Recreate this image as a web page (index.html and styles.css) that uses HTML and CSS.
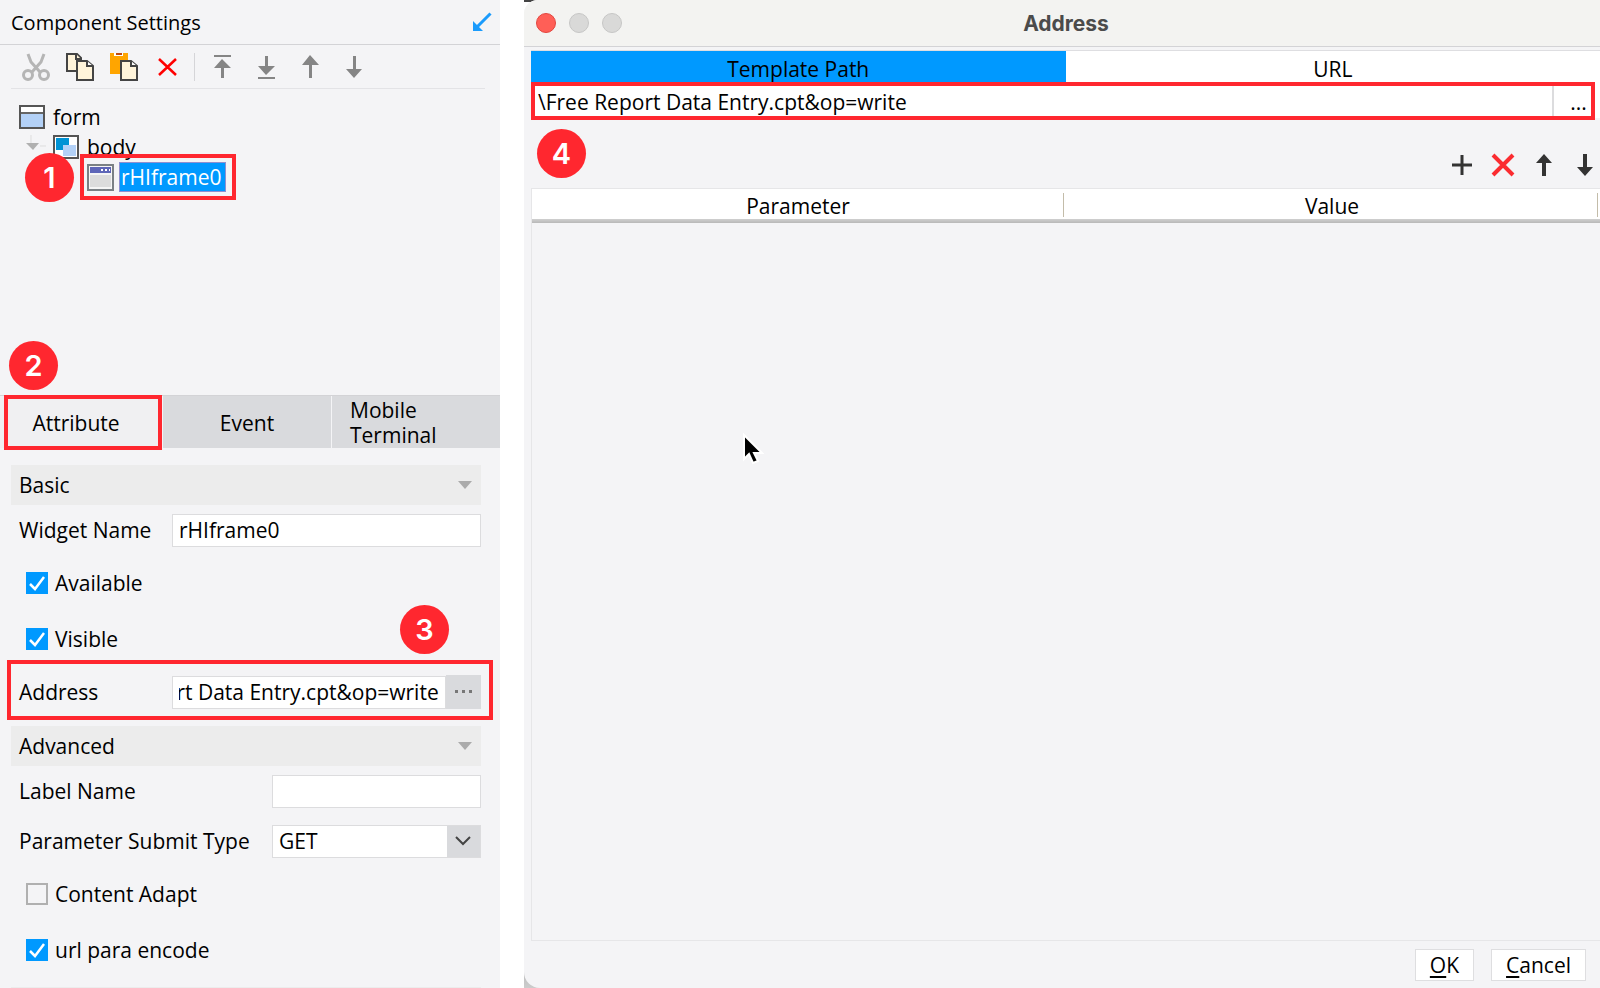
FILE: index.html
```html
<!DOCTYPE html>
<html lang="en">
<head>
  <meta charset="UTF-8">
  <meta name="viewport" content="width=device-width, initial-scale=1.0">
  <title>Component Settings</title>
  <link rel="stylesheet" href="styles.css">
</head>
<body>
  <aside class="settings">
    <header class="settings-header">
      <h1>Component Settings</h1>
      <button class="icon-button" aria-label="Collapse panel">
        <svg width="20" height="20" viewBox="0 0 20 20"><path d="M18.500 1.500 5 15" stroke="#1a9bfc" stroke-width="3" fill="none"/><path d="M1 9v10h10z" fill="#1a9bfc"/></svg>
      </button>
    </header>

    <div class="toolbar">
      <button class="icon-button" aria-label="Cut">
        <svg width="28" height="28" viewBox="0 0 28 28" fill="none" stroke="#b5b5b5"><path d="M6 1l3 8 9 10M22 1l-3 8-9 10" stroke-width="3"/><circle cx="6" cy="22" r="4.500" stroke-width="3"/><circle cx="22" cy="22" r="4.500" stroke-width="3"/></svg>
      </button>
      <button class="icon-button" aria-label="Copy">
        <svg width="28" height="28" viewBox="0 0 28 28" fill="#fff4da" stroke="#444" stroke-width="2"><path d="M1 1h10l4 4v13H1z"/><path d="M10 1v5h5"/><path d="M11 8h10l6 5v14H11z"/><path d="M21 8v5h6" fill="#fff"/></svg>
      </button>
      <button class="icon-button" aria-label="Paste">
        <svg width="28" height="28" viewBox="0 0 28 28"><path d="M0 0h18v21H0z" fill="#ffa500"/><path d="M4 0h9v3H4z" fill="#fff"/><path d="M6 0h6v2H6z" fill="#c04a10"/><g fill="#fff4da" stroke="#444" stroke-width="2"><path d="M11 8h10l6 5v14H11z"/><path d="M21 8v5h6" fill="#fff"/></g></svg>
      </button>
      <button class="icon-button" aria-label="Delete">
        <svg width="28" height="28" viewBox="0 0 28 28"><path d="M5 6l17 16M22 6 5 22" stroke="#f00" stroke-width="2.500"/></svg>
      </button>
      <span class="toolbar-divider"></span>
      <button class="icon-button" aria-label="Move to top">
        <svg width="28" height="28" viewBox="0 0 28 28" fill="#858585"><path d="M6 2h17v2H6zM14 6l9 9h-7v10h-3V15H6z"/></svg>
      </button>
      <button class="icon-button" aria-label="Move to bottom">
        <svg width="28" height="28" viewBox="0 0 28 28" fill="#858585"><path d="M6 24h17v2H6zM13 3h3v10h7l-9 9-8-9h7z"/></svg>
      </button>
      <button class="icon-button" aria-label="Move up">
        <svg width="28" height="28" viewBox="0 0 28 28" fill="#858585"><path d="M14 2l9 10h-7v13h-3V12H6z"/></svg>
      </button>
      <button class="icon-button" aria-label="Move down">
        <svg width="28" height="28" viewBox="0 0 28 28" fill="#858585"><path d="M13 3h3v13h6l-8 9-8-9h7z"/></svg>
      </button>
    </div>

    <ul class="tree">
      <li class="tree-item">
        <svg width="26" height="24" viewBox="0 0 26 24"><path d="M1 1h24v22H1z" fill="#b3d1f7" stroke="#555" stroke-width="2"/><path d="M2 2h22v5H2z" fill="#fff"/><path d="M2 7h22v2H2z" fill="#666"/></svg>
        <span>form</span>
      </li>
      <li class="tree-item level-1">
        <svg class="tree-toggle" width="20" height="24" viewBox="0 0 20 24"><path d="M5 0v8M14 11h6" stroke="#ddd"/><path d="M0 8h13l-6 7z" fill="#b0b0b0"/></svg>
        <svg width="26" height="24" viewBox="0 0 26 24"><path d="M1 1h24v22H1z" fill="#fff" stroke="#555" stroke-width="2"/><path d="M3 3h13v12H3z" fill="#0093d5"/><path d="M10 10h13v11H10z" fill="#b3d1f7"/></svg>
        <span>body</span>
      </li>
      <li class="tree-item level-2">
        <svg width="27" height="27" viewBox="0 0 27 27"><path d="M1 1h25v25H1z" fill="#f5f5f5" stroke="#7a8084" stroke-width="2"/><path d="M3 3h21v6H3z" fill="#5e66b8"/><path d="M14 5h2v2h-2zM18 5h2v2h-2zM22 5h1v2h-1z" fill="#fff"/><path d="M3 11h21v12H3z" fill="#dcdcdc"/></svg>
        <span class="tree-selected">rHIframe0</span>
        <span class="frame frame-tree"></span>
        <span class="step step-1">1</span>
      </li>
    </ul>

    <nav class="tabs">
      <button class="tab active">Attribute<span class="frame frame-tab"></span></button>
      <button class="tab">Event</button>
      <button class="tab wrap">Mobile Terminal</button>
      <span class="step step-2">2</span>
    </nav>

    <form class="attributes">
      <h2 class="section-title">Basic <span class="caret"></span></h2>
      <div class="row">
        <label for="widget-name">Widget Name</label>
        <input type="text" id="widget-name" class="field" value="rHIframe0">
      </div>
      <div class="row check">
        <input type="checkbox" id="available" checked>
        <label for="available">Available</label>
      </div>
      <div class="row check">
        <input type="checkbox" id="visible" checked>
        <label for="visible">Visible</label>
      </div>
      <div class="row">
        <label for="address">Address</label>
        <input type="text" id="address" class="field" value="\Free Report Data Entry.cpt&amp;op=write">
        <button type="button" class="browse" aria-label="Edit address">
          <svg width="18" height="4" viewBox="0 0 18 4" fill="#777"><path d="M0 0h3v3H0zM7 0h3v3H7zM14 0h3v3h-3z"/></svg>
        </button>
        <span class="frame frame-address"></span>
        <span class="step step-3">3</span>
      </div>
      <h2 class="section-title">Advanced <span class="caret"></span></h2>
      <div class="row wide-label">
        <label for="label-name">Label Name</label>
        <input type="text" id="label-name" class="field">
      </div>
      <div class="row wide-label">
        <label for="submit-type">Parameter Submit Type</label>
        <select id="submit-type" class="field">
          <option>GET</option>
          <option>POST</option>
        </select>
      </div>
      <div class="row check">
        <input type="checkbox" id="content-adapt">
        <label for="content-adapt">Content Adapt</label>
      </div>
      <div class="row check">
        <input type="checkbox" id="url-encode" checked>
        <label for="url-encode">url para encode</label>
      </div>
      <div class="section-title"></div>
    </form>
  </aside>

  <main class="stage">
    <section class="dialog">
      <header class="titlebar">
        <button class="light close" aria-label="Close"></button>
        <button class="light" aria-label="Minimize"></button>
        <button class="light" aria-label="Zoom"></button>
        <h2>Address</h2>
      </header>

      <div class="dialog-body">
        <div class="source-tabs">
          <button class="active">Template Path</button>
          <button>URL</button>
        </div>
        <div class="path">
          <input type="text" aria-label="Template path" value="\Free Report Data Entry.cpt&amp;op=write">
          <button aria-label="Choose template">...</button>
          <span class="frame frame-path"></span>
          <span class="step step-4">4</span>
        </div>

        <div class="param-tools">
          <button class="icon-button" aria-label="Add">
            <svg width="24" height="24" viewBox="0 0 24 24"><path d="M2 12h20M12 2v20" stroke="#333" stroke-width="3"/></svg>
          </button>
          <button class="icon-button" aria-label="Delete">
            <svg width="24" height="24" viewBox="0 0 24 24"><path d="M2 2l20 20M22 2 2 22" stroke="#fb2c30" stroke-width="4"/></svg>
          </button>
          <button class="icon-button" aria-label="Move up">
            <svg width="24" height="24" viewBox="0 0 24 24" fill="#333"><path d="M12 1l8 9h-6v13h-4V10H4z"/></svg>
          </button>
          <button class="icon-button" aria-label="Move down">
            <svg width="24" height="24" viewBox="0 0 24 24" fill="#333"><path d="M10 1h4v13h6l-8 9-8-9h6z"/></svg>
          </button>
        </div>

        <div class="params">
          <table>
            <thead>
              <tr><th>Parameter</th><th>Value</th></tr>
            </thead>
            <tbody></tbody>
          </table>
          <svg class="cursor" width="24" height="34" viewBox="0 0 24 34"><path d="M2 2v24l5-5 4 9 5-2-4-8h8z" fill="#000" stroke="#fff" stroke-width="2"/></svg>
        </div>
      </div>

      <footer class="dialog-footer">
        <button><u>O</u>K</button>
        <button><u>C</u>ancel</button>
      </footer>
    </section>
  </main>

  <script>
    // Keep the end of the long path in view
    const address = document.getElementById('address');
    address.scrollLeft = address.scrollWidth;
  </script>
</body>
</html>
```
FILE: styles.css
```css
* {
  box-sizing: border-box;
}

body {
  margin: 0;
  height: 100vh;
  display: grid;
  grid-template-columns: 500px 1fr;
  column-gap: 24px;
  overflow: hidden;
  background-color: #fff;
  color: #000;
  font-family: "Open Sans", "Noto Sans", sans-serif;
  font-size: 21px;
  line-height: 25px;
}

h1, h2 {
  margin: 0;
  font-size: 21px;
  font-weight: normal;
}

h1 {
  font-size: 20px;
  font-weight: 500;
}

button, input, select {
  font: inherit;
  color: inherit;
  margin: 0;
  padding: 0;
  border: none;
  border-radius: 0;
}

svg {
  display: block;
}

.icon-button {
  background: none;
  cursor: pointer;
}

/* Component settings panel */
.settings {
  display: flex;
  flex-direction: column;
  min-height: 0;
  overflow: hidden;
  background-color: #f4f4f6;
}

.settings > * {
  flex-shrink: 0;
}

.settings-header {
  display: flex;
  justify-content: space-between;
  align-items: center;
  height: 45px;
  padding: 0 8px 0 11px;
  border-bottom: 1px solid #d3d3d6;
}

.toolbar {
  display: flex;
  align-items: center;
  gap: 16px;
  height: 44px;
  margin: 0 15px 0 11px;
  padding-left: 11px;
  border-bottom: 1px solid #e3e3e6;
}

.toolbar-divider {
  width: 1px;
  height: 28px;
  margin: 0 -3px 0 -4px;
  background-color: #d5d5d8;
}

.tree {
  height: 306px;
  margin: 0;
  padding: 13px 0 0 19px;
  list-style: none;
}

.tree-item {
  position: relative;
  display: flex;
  align-items: center;
  gap: 8px;
  height: 30px;
}

.level-1 {
  padding-left: 34px;
}

.level-2 {
  gap: 5px;
  padding-left: 68px;
}

.tree-toggle {
  position: absolute;
  left: 7px;
}

.tree-selected {
  height: 30px;
  padding: 2px 3px 2px 1px;
  border: 1px solid #8f8fd0;
  background-color: #0099ff;
  color: #fff;
}

.tabs {
  position: relative;
  display: grid;
  grid-template-columns: 162fr 168fr 168fr;
  gap: 1px;
  height: 53px;
  border-top: 1px solid #d3d3d6;
}

.tab {
  position: relative;
  padding: 2px 10px 0 0;
  background-color: #d9dadd;
  line-height: 25px;
}

.tab:nth-child(2) {
  padding: 2px 0 0;
}

.tab.active {
  background-color: #f0f0f2;
}

.tab.wrap {
  padding: 2px 18px 0;
  text-align: left;
}

.attributes {
  padding: 17px 19px 0 11px;
}

.section-title {
  display: flex;
  justify-content: space-between;
  align-items: center;
  height: 40px;
  margin-top: 9px;
  padding: 0 9px 0 8px;
  background-color: #ececec;
}

.section-title:first-child {
  margin-top: 0;
}

.caret {
  border: 7px solid transparent;
  border-top: 8px solid #ababab;
  border-bottom: none;
}

.row {
  position: relative;
  display: grid;
  grid-template-columns: 153px 1fr auto;
  align-items: center;
  height: 50px;
  padding-left: 8px;
}

.row.wide-label {
  grid-template-columns: 253px 1fr;
}

.field {
  width: 100%;
  min-width: 0;
  height: 33px;
  padding: 0 6px;
  border: 1px solid #dcdcde;
  background-color: #fff;
}

select.field {
  appearance: none;
  background: #fff url("data:image/svg+xml,%3Csvg xmlns='http://www.w3.org/2000/svg' width='33' height='33'%3E%3Cpath d='M0 0h33v33H0z' fill='%23d9dadd'/%3E%3Cpath d='M9 12l7 7 7-7' fill='none' stroke='%23444' stroke-width='2'/%3E%3C/svg%3E") no-repeat right center;
}

.browse {
  display: flex;
  align-items: center;
  justify-content: center;
  width: 35px;
  height: 34px;
  background-color: #d9dadd;
}

.row.check {
  display: flex;
  gap: 7px;
  height: 56px;
  padding-left: 15px;
}

.check input {
  appearance: none;
  width: 22px;
  height: 22px;
  border: 2px solid #b0b0b0;
}

.check input:checked {
  border: none;
  background: #0099ff url("data:image/svg+xml,%3Csvg xmlns='http://www.w3.org/2000/svg' width='22' height='22'%3E%3Cpath d='M4 12l5 5L18 5' fill='none' stroke='%23fff' stroke-width='2.500'/%3E%3C/svg%3E") no-repeat center;
}

/* Numbered steps and their red frames */
.frame {
  position: absolute;
  border: 4px solid #ff272f;
  pointer-events: none;
}

.step {
  position: absolute;
  display: flex;
  align-items: center;
  justify-content: center;
  width: 49px;
  height: 49px;
  border-radius: 50%;
  background-color: #ff272f;
  color: #fff;
  font-family: Inter, sans-serif;
  font-size: 29px;
  font-weight: 600;
}

.frame-tree {
  top: -8px;
  left: 61px;
  width: 156px;
  height: 46px;
}

.frame-tab {
  top: -1px;
  right: 0;
  bottom: -2px;
  left: 4px;
}

.frame-address {
  top: -7px;
  right: -12px;
  bottom: -3px;
  left: -4px;
}

.frame-path {
  top: -4px;
  right: 5px;
  bottom: -2px;
  left: 0;
}

.step-1 {
  top: -9px;
  left: 6px;
}

.step-2 {
  top: -55px;
  left: 9px;
}

.step-3 {
  top: -62px;
  right: 32px;
}

.step-4 {
  top: 43px;
  left: 6px;
}

/* Address dialog */
.stage {
  min-width: 0;
  height: 100vh;
  background:
    linear-gradient(#444, #444) no-repeat left top / 13px 2px,
    linear-gradient(#bbb, #ccc) no-repeat left bottom / 20px 20px;
}

.dialog {
  display: flex;
  flex-direction: column;
  height: 100%;
  overflow: hidden;
  border-radius: 14px 0 0 16px;
  background-color: #f4f4f6;
}

.titlebar {
  display: flex;
  align-items: center;
  gap: 13px;
  height: 47px;
  padding-left: 12px;
  border-bottom: 1px solid #d3d3d6;
  background-color: #f3f3f1;
}

.titlebar h2 {
  flex: 1;
  padding-right: 103px;
  color: #4b4b4b;
  font-family: Inter, sans-serif;
  font-weight: bold;
  text-align: center;
}

.light {
  width: 20px;
  height: 20px;
  border: 1px solid #c6c6c5;
  border-radius: 50%;
  background-color: #d9d9d8;
}

.light.close {
  border-color: #e2463f;
  background-color: #ff5f57;
}

.dialog-body {
  display: flex;
  flex-direction: column;
  flex: 1;
  padding: 3px 0 0 7px;
}

.source-tabs {
  display: grid;
  grid-template-columns: 1fr 1fr;
  height: 36px;
  border-top: 1px solid #dedee1;
}

.source-tabs button {
  padding-top: 1px;
  background-color: #fff;
}

.source-tabs .active {
  background-color: #0099ff;
}

.path {
  position: relative;
  display: flex;
  height: 32px;
}

.path input {
  flex: 1;
  padding: 0 7px;
  border-right: 2px solid #dcdcde;
  background-color: #fff;
}

.path button {
  width: 46px;
  padding-left: 3px;
  background-color: #fff;
}

.param-tools {
  display: flex;
  justify-content: flex-end;
  align-items: center;
  gap: 17px;
  height: 70px;
  padding: 24px 3px 0 0;
}

.params {
  position: relative;
  flex: 1;
  border: 1px solid #e6e6e8;
  border-right: none;
}

.params table {
  width: 100%;
  table-layout: fixed;
  border-collapse: collapse;
}

.params th {
  height: 34px;
  padding: 1px 2px 0 0;
  background:
    linear-gradient(#d0d0d0, #b8b8b8) no-repeat left bottom / 100% 4px,
    linear-gradient(#c3bca9, #c3bca9) no-repeat right 2px top 4px / 1px 24px,
    #fff;
  font-weight: normal;
}

.cursor {
  position: absolute;
  top: 244px;
  left: 210px;
}

.dialog-footer {
  display: flex;
  justify-content: flex-end;
  gap: 17px;
  padding: 8px 14px 7px 0;
}

.dialog-footer button {
  height: 32px;
  padding: 0 14px;
  border: 1px solid #dedee0;
  background-color: #fff;
}

.dialog-footer u {
  text-underline-offset: 3px;
}
```
